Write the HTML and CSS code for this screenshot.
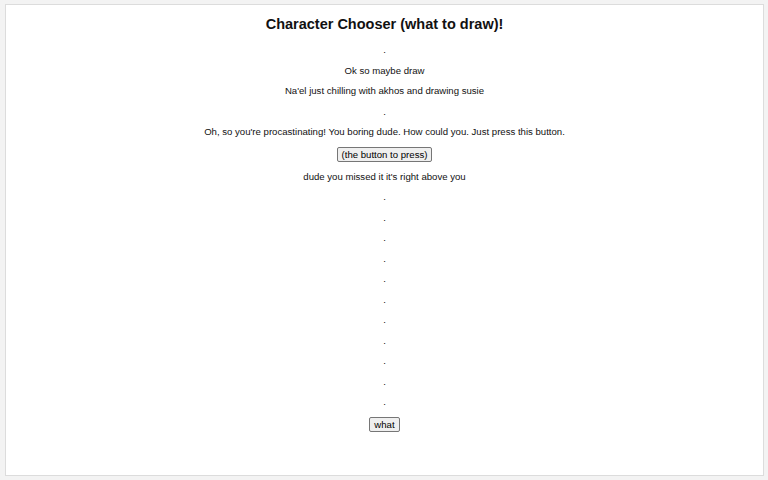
FILE: index.html
```html
<!DOCTYPE html>
<html>
<head>
  <meta name="viewport" content="width=device-width, initial-scale=1">
  <title>Character Chooser</title>
  <link rel="stylesheet" href="styles.css">
</head>
<body>
  <div class="page">
    <h1>Character Chooser (what to draw)!</h1>
    <div class="lines">
      <p>.</p>
      <p>Ok so maybe draw</p>
      <p id="pick">Na'el just chilling with akhos and drawing susie</p>
      <p>.</p>
      <p>Oh, so you're procastinating! You boring dude. How could you. Just press this button.</p>
      <button class="btn" type="button">(the button to press)</button>
      <p>dude you missed it it's right above you</p>
      <p>.</p>
      <p>.</p>
      <p>.</p>
      <p>.</p>
      <p>.</p>
      <p>.</p>
      <p>.</p>
      <p>.</p>
      <p>.</p>
      <p>.</p>
      <p>.</p>
      <button class="btn" type="button">what</button>
    </div>
  </div>
</body>
</html>
```

FILE: styles.css
```css
* {
  box-sizing: border-box;
}

html, body {
  height: 100%;
}

body {
  margin: 0;
  padding: 4px 4px 4px 5px;
  background: #f3f3f3;
  font-family: 'Liberation Sans', Arial, sans-serif;
  color: #111;
}

.page {
  height: 100%;
  background: #fff;
  border: 1px solid #dcdcdc;
  padding: 11px 20px;
  text-align: center;
}

.page h1 {
  margin: 0 0 11px;
  font-size: 14.5px;
  line-height: 17px;
  font-weight: bold;
}

.lines {
  display: flex;
  flex-direction: column;
  align-items: center;
  gap: 9px;
}

.lines p {
  margin: 0;
  font-size: 9.6px;
  line-height: 11.5px;
}

.btn {
  font-family: 'Liberation Sans', Arial, sans-serif;
  font-size: 9.6px;
  line-height: 12px;
  padding: 1px 4px 0;
  color: #000;
  background: #efefef;
  border: 1px solid #767676;
  border-radius: 2px;
}
```
